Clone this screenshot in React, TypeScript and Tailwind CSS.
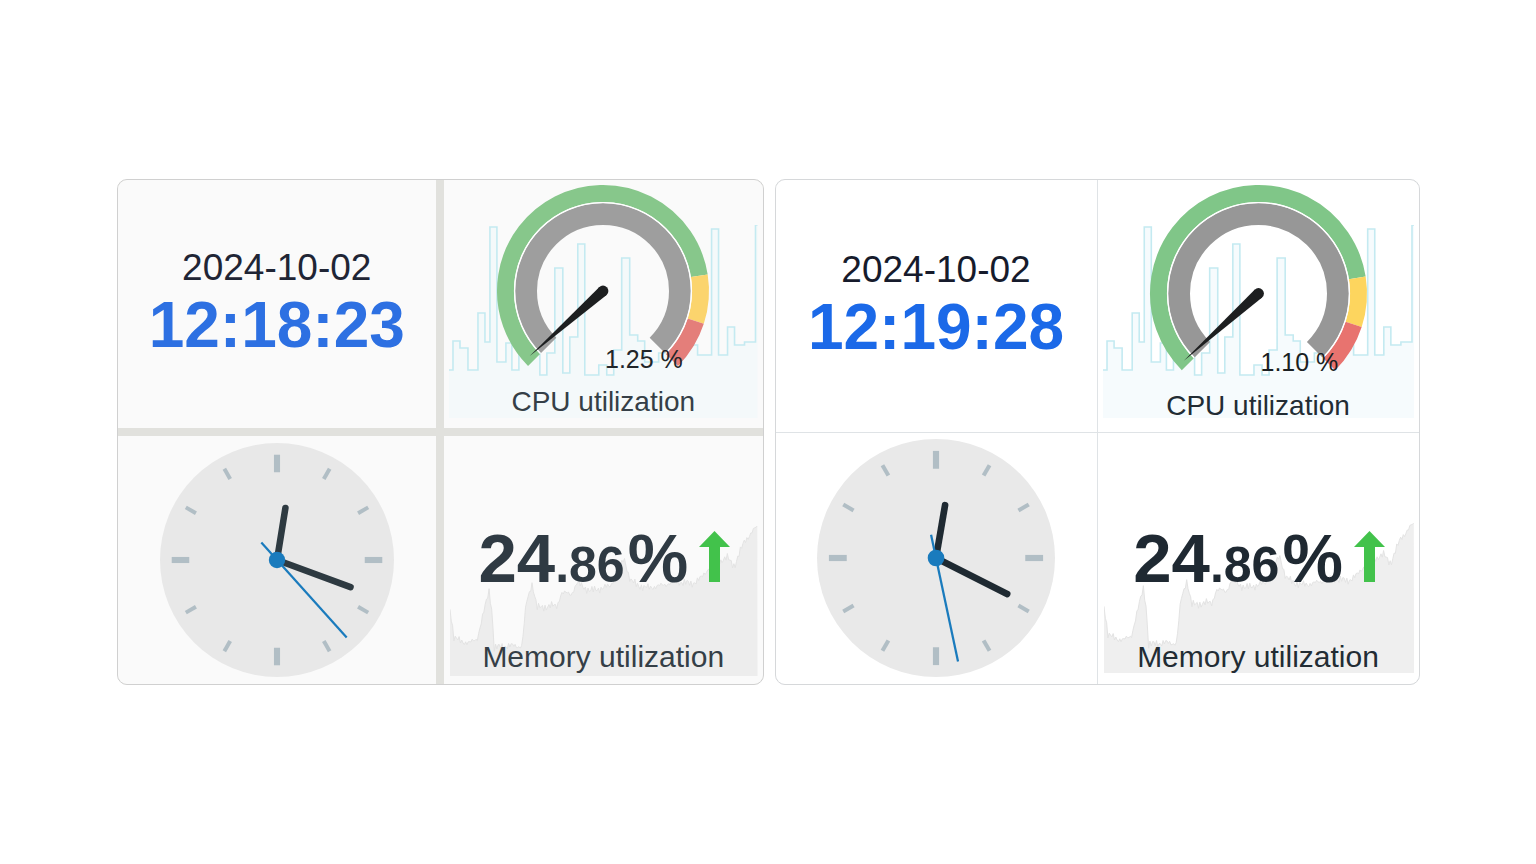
import React from 'react';

type Variant = 'grid' | 'lines';

interface CardProps {
  variant: Variant;
  date: string;
  time: string;
  cpu: number;
  gaugeRadius: number;
  clockSize: number;
  hms: [number, number, number];
}

// step data for the cpu sparkline, drawn in a 309 x 193 box
const CPU_STEPS: [number, number][] = [
  [0, 145], [4, 116], [11, 123], [19, 145], [29, 88], [36, 117], [41, 2], [48, 137], [57, 118], [63, 145],
  [70, 96], [77, 126], [84, 108], [91, 150], [98, 128], [106, 43], [114, 148], [121, 112], [129, 19], [136, 150],
  [150, 140], [158, 150], [165, 125], [173, 33], [181, 110], [189, 116], [196, 137], [210, 128], [223, 125],
  [236, 120], [249, 130], [263, 4], [270, 130], [279, 102], [286, 120], [296, 117], [307, 0],
];

// memory history outline, 307 x 150 box
const MEM_POINTS: [number, number][] = [
  [0, 82], [4, 112], [10, 115], [20, 117], [27, 113], [34, 85], [39, 65], [42, 85], [44, 122], [55, 120],
  [72, 120], [76, 78], [82, 57], [87, 82], [100, 80], [107, 80], [111, 67], [121, 68], [127, 57], [140, 65],
  [160, 60], [174, 32], [180, 55], [194, 62], [210, 60], [225, 55], [241, 58], [251, 52], [261, 38],
  [277, 32], [284, 40], [294, 15], [307, 0],
];

const stepPath = (pts: [number, number][], w: number) => {
  let d = `M0 ${pts[0][1]}`;
  for (let i = 1; i < pts.length; i++) d += ` H${pts[i][0]} V${pts[i][1]}`;
  return d + ` H${w}`;
};

const memPath = () => {
  const out: string[] = [];
  for (let x = 0; x <= 307; x += 1.3) {
    let i = 0;
    while (i < MEM_POINTS.length - 2 && MEM_POINTS[i + 1][0] < x) i++;
    const [x0, y0] = MEM_POINTS[i];
    const [x1, y1] = MEM_POINTS[i + 1];
    const t = Math.min(1, Math.max(0, (x - x0) / (x1 - x0)));
    let y = y0 + (y1 - y0) * t;
    y += 2.2 * Math.sin(x * 1.9) + 1.6 * Math.sin(x * 5.3 + 1) + 1.1 * Math.sin(x * 11.7);
    y = Math.min(148, Math.max(0, y));
    out.push(`${x.toFixed(1)} ${y.toFixed(1)}`);
  }
  return 'M' + out.join(' L');
};

const polar = (cx: number, cy: number, r: number, deg: number): [number, number] => [
  cx + r * Math.cos((deg * Math.PI) / 180),
  cy - r * Math.sin((deg * Math.PI) / 180),
];

const arc = (cx: number, cy: number, r: number, p0: number, p1: number) => {
  const a0 = 225 - 270 * p0;
  const a1 = 225 - 270 * p1;
  const [x0, y0] = polar(cx, cy, r, a0);
  const [x1, y1] = polar(cx, cy, r, a1);
  return `M${x0} ${y0} A${r} ${r} 0 ${a0 - a1 > 180 ? 1 : 0} 1 ${x1} ${y1}`;
};

const Gauge: React.FC<{ value: number; r: number; variant: Variant }> = ({ value, r, variant }) => {
  const cx = r;
  const cy = r;
  const h = Math.ceil(r + r * 0.7072) + 1;
  const colors =
    variant === 'grid'
      ? { green: '#87c78b', yellow: '#fbd46d', red: '#e47e7a', gray: '#9e9e9e', text: '#222629' }
      : { green: '#80c688', yellow: '#fdd55e', red: '#e8736f', gray: '#979797', text: '#1b1f22' };
  const a = 225 - 270 * (value / 100);
  const tip = polar(cx, cy, r - 8, a);
  const rad = (a * Math.PI) / 180;
  const nx = Math.sin(rad) * 5.4;
  const ny = Math.cos(rad) * 5.4;

  return (
    <svg width={2 * r} height={h} viewBox={`0 0 ${2 * r} ${h}`} className="relative overflow-visible">
      <path d={arc(cx, cy, r - 8.5, 0, 0.8)} stroke={colors.green} strokeWidth={17} fill="none" />
      <path d={arc(cx, cy, r - 8.5, 0.8, 0.9)} stroke={colors.yellow} strokeWidth={17} fill="none" />
      <path d={arc(cx, cy, r - 8.5, 0.9, 1)} stroke={colors.red} strokeWidth={17} fill="none" />
      <path d={arc(cx, cy, r - 29, 0, 1)} stroke={colors.gray} strokeWidth={22} fill="none" />
      <path d={arc(cx, cy, r - 17.6, 0, 1)} stroke="#ffffff" strokeWidth={1.4} fill="none" />
      <polygon
        points={`${cx + nx},${cy + ny} ${tip[0]},${tip[1]} ${cx - nx},${cy - ny}`}
        fill="#1d1f20"
      />
      <circle cx={cx} cy={cy} r={5.4} fill="#1d1f20" />
      <text x={cx + 2} y={cy + 77} fontSize={25} fill={colors.text}>
        {value.toFixed(2)} %
      </text>
    </svg>
  );
};

const Clock: React.FC<{ size: number; hms: [number, number, number]; variant: Variant }> = ({ size, hms, variant }) => {
  const [h, m, s] = hms;
  const hourDeg = ((h % 12) + m / 60 + s / 3600) * 30;
  const minDeg = (m + s / 60) * 6;
  const secDeg = s * 6;
  const hand = variant === 'grid' ? '#2e3a41' : '#1f2a32';
  const at = (deg: number, r: number) => {
    const t = (deg * Math.PI) / 180;
    return [Math.sin(t) * r, -Math.cos(t) * r];
  };
  const ticks = Array.from({ length: 12 }, (_, i) => {
    const major = i % 3 === 0;
    const [x0, y0] = at(i * 30, major ? 75 : 80);
    const [x1, y1] = at(i * 30, 90);
    return (
      <line key={i} x1={x0} y1={y0} x2={x1} y2={y1} stroke="#b1bec5" strokeWidth={major ? 5.2 : 3.4} />
    );
  });
  const [hx, hy] = at(hourDeg, 45);
  const [mx, my] = at(minDeg, 67);
  const [sx, sy] = at(secDeg, 89);
  const [tx, ty] = at(secDeg, -20);

  return (
    <svg width={size} height={size} viewBox="-100 -100 200 200">
      <circle r={100} fill={variant === 'grid' ? '#e8e8e8' : '#e9e9e9'} />
      {ticks}
      <line x1={0} y1={0} x2={hx} y2={hy} stroke={hand} strokeWidth={5.6} strokeLinecap="round" />
      <line x1={0} y1={0} x2={mx} y2={my} stroke={hand} strokeWidth={5.6} strokeLinecap="round" />
      <line x1={tx} y1={ty} x2={sx} y2={sy} stroke="#1a7bbd" strokeWidth={1.9} />
      <circle r={7} fill="#1a7bbd" />
    </svg>
  );
};

const StatusCard: React.FC<CardProps> = ({ variant, date, time, cpu, gaugeRadius, clockSize, hms }) => {
  const isGrid = variant === 'grid';
  const cell = isGrid ? 'bg-[#fafafa]' : 'bg-white';
  const spark = React.useMemo(() => stepPath(CPU_STEPS, 309), []);
  const mem = React.useMemo(() => memPath(), []);

  return (
    <div
      className={
        isGrid
          ? 'grid h-[506px] w-[647px] grid-cols-2 grid-rows-2 gap-[8px] overflow-hidden rounded-[10px] border border-[#d0d0d0] bg-[#e1e1dd]'
          : 'grid h-[506px] w-[645px] grid-cols-2 grid-rows-2 gap-px overflow-hidden rounded-[10px] border border-[#d6d8da] bg-[#dfe3e6]'
      }
    >
      {/* date + time */}
      <div className={`${cell} flex flex-col items-center justify-center pb-[3px]`}>
        <div className={`text-[37px] leading-[40px] ${isGrid ? 'text-[#1f2535]' : 'text-[#161b2c]'}`}>{date}</div>
        <div
          className={`mt-[5px] text-[64px] font-bold leading-[64px] ${isGrid ? 'text-[#2d70e2]' : 'text-[#1b69e8]'}`}
        >
          {time}
        </div>
      </div>

      {/* cpu gauge */}
      <div className={`${cell} relative flex flex-col items-center pt-[5px]`}>
        <svg
          className="absolute top-[45px] bottom-[9px] left-[5px] right-[5px] h-[193px] w-[calc(100%-10px)]"
          viewBox="0 0 309 193"
          preserveAspectRatio="none"
        >
          <path d={`${spark} V193 H0 Z`} fill={isGrid ? '#eef7f9' : '#eef7fc'} fillOpacity={0.55} />
          <path d={spark} fill="none" stroke="#c4eaf1" strokeWidth={1.6} vectorEffect="non-scaling-stroke" />
        </svg>
        <Gauge value={cpu} r={gaugeRadius} variant={variant} />
        <div
          className={`relative text-[28px] leading-[32px] ${isGrid ? 'mt-[19px] text-[#353f47]' : 'mt-[18px] text-[#222c34]'}`}
        >
          CPU utilization
        </div>
      </div>

      {/* analog clock */}
      <div className={`${cell} flex items-center justify-center`}>
        <Clock size={clockSize} hms={hms} variant={variant} />
      </div>

      {/* memory */}
      <div className={`${cell} relative flex flex-col items-center justify-end pb-[10px]`}>
        <svg
          className="absolute top-[90px] left-[6px] right-[5px] h-[150px] w-[calc(100%-11px)]"
          viewBox="0 0 307 150"
          preserveAspectRatio="none"
        >
          <path d={`${mem} L307 150 L0 150 Z`} fill={isGrid ? '#ededed' : '#efefef'} />
          <path d={mem} fill="none" stroke="#e3e3e3" strokeWidth={1} vectorEffect="non-scaling-stroke" />
        </svg>
        <div
          className={`relative ml-[2px] mb-[41px] flex items-baseline font-bold ${isGrid ? 'text-[#2f3a43]' : 'text-[#1f2932]'}`}
        >
          <span className="text-[69px] leading-[68px]">24</span>
          <span className="text-[50px] leading-[68px]">.86</span>
          <span className="ml-[3px] text-[68px] leading-[68px]">%</span>
          <svg width="31" height="51" viewBox="0 0 31 51" className="ml-[11px]">
            <polygon points="15.5,0 31,16 21,16 21,51 10,51 10,16 0,16" fill="#42c24b" />
          </svg>
        </div>
        <div className={`relative text-[30px] leading-[34px] ${isGrid ? 'text-[#353f47]' : 'text-[#222c34]'}`}>
          Memory utilization
        </div>
      </div>
    </div>
  );
};

const App: React.FC = () => {
  return (
    <div className="flex h-screen w-full items-center justify-center bg-white font-['Liberation_Sans',Arial,sans-serif]">
      <div className="flex gap-[11px]">
        <StatusCard
          variant="grid"
          date="2024-10-02"
          time="12:18:23"
          cpu={1.25}
          gaugeRadius={106}
          clockSize={234}
          hms={[12, 18, 23]}
        />
        <StatusCard
          variant="lines"
          date="2024-10-02"
          time="12:19:28"
          cpu={1.1}
          gaugeRadius={108.5}
          clockSize={238}
          hms={[12, 19, 28]}
        />
      </div>
    </div>
  );
};

export default App;
